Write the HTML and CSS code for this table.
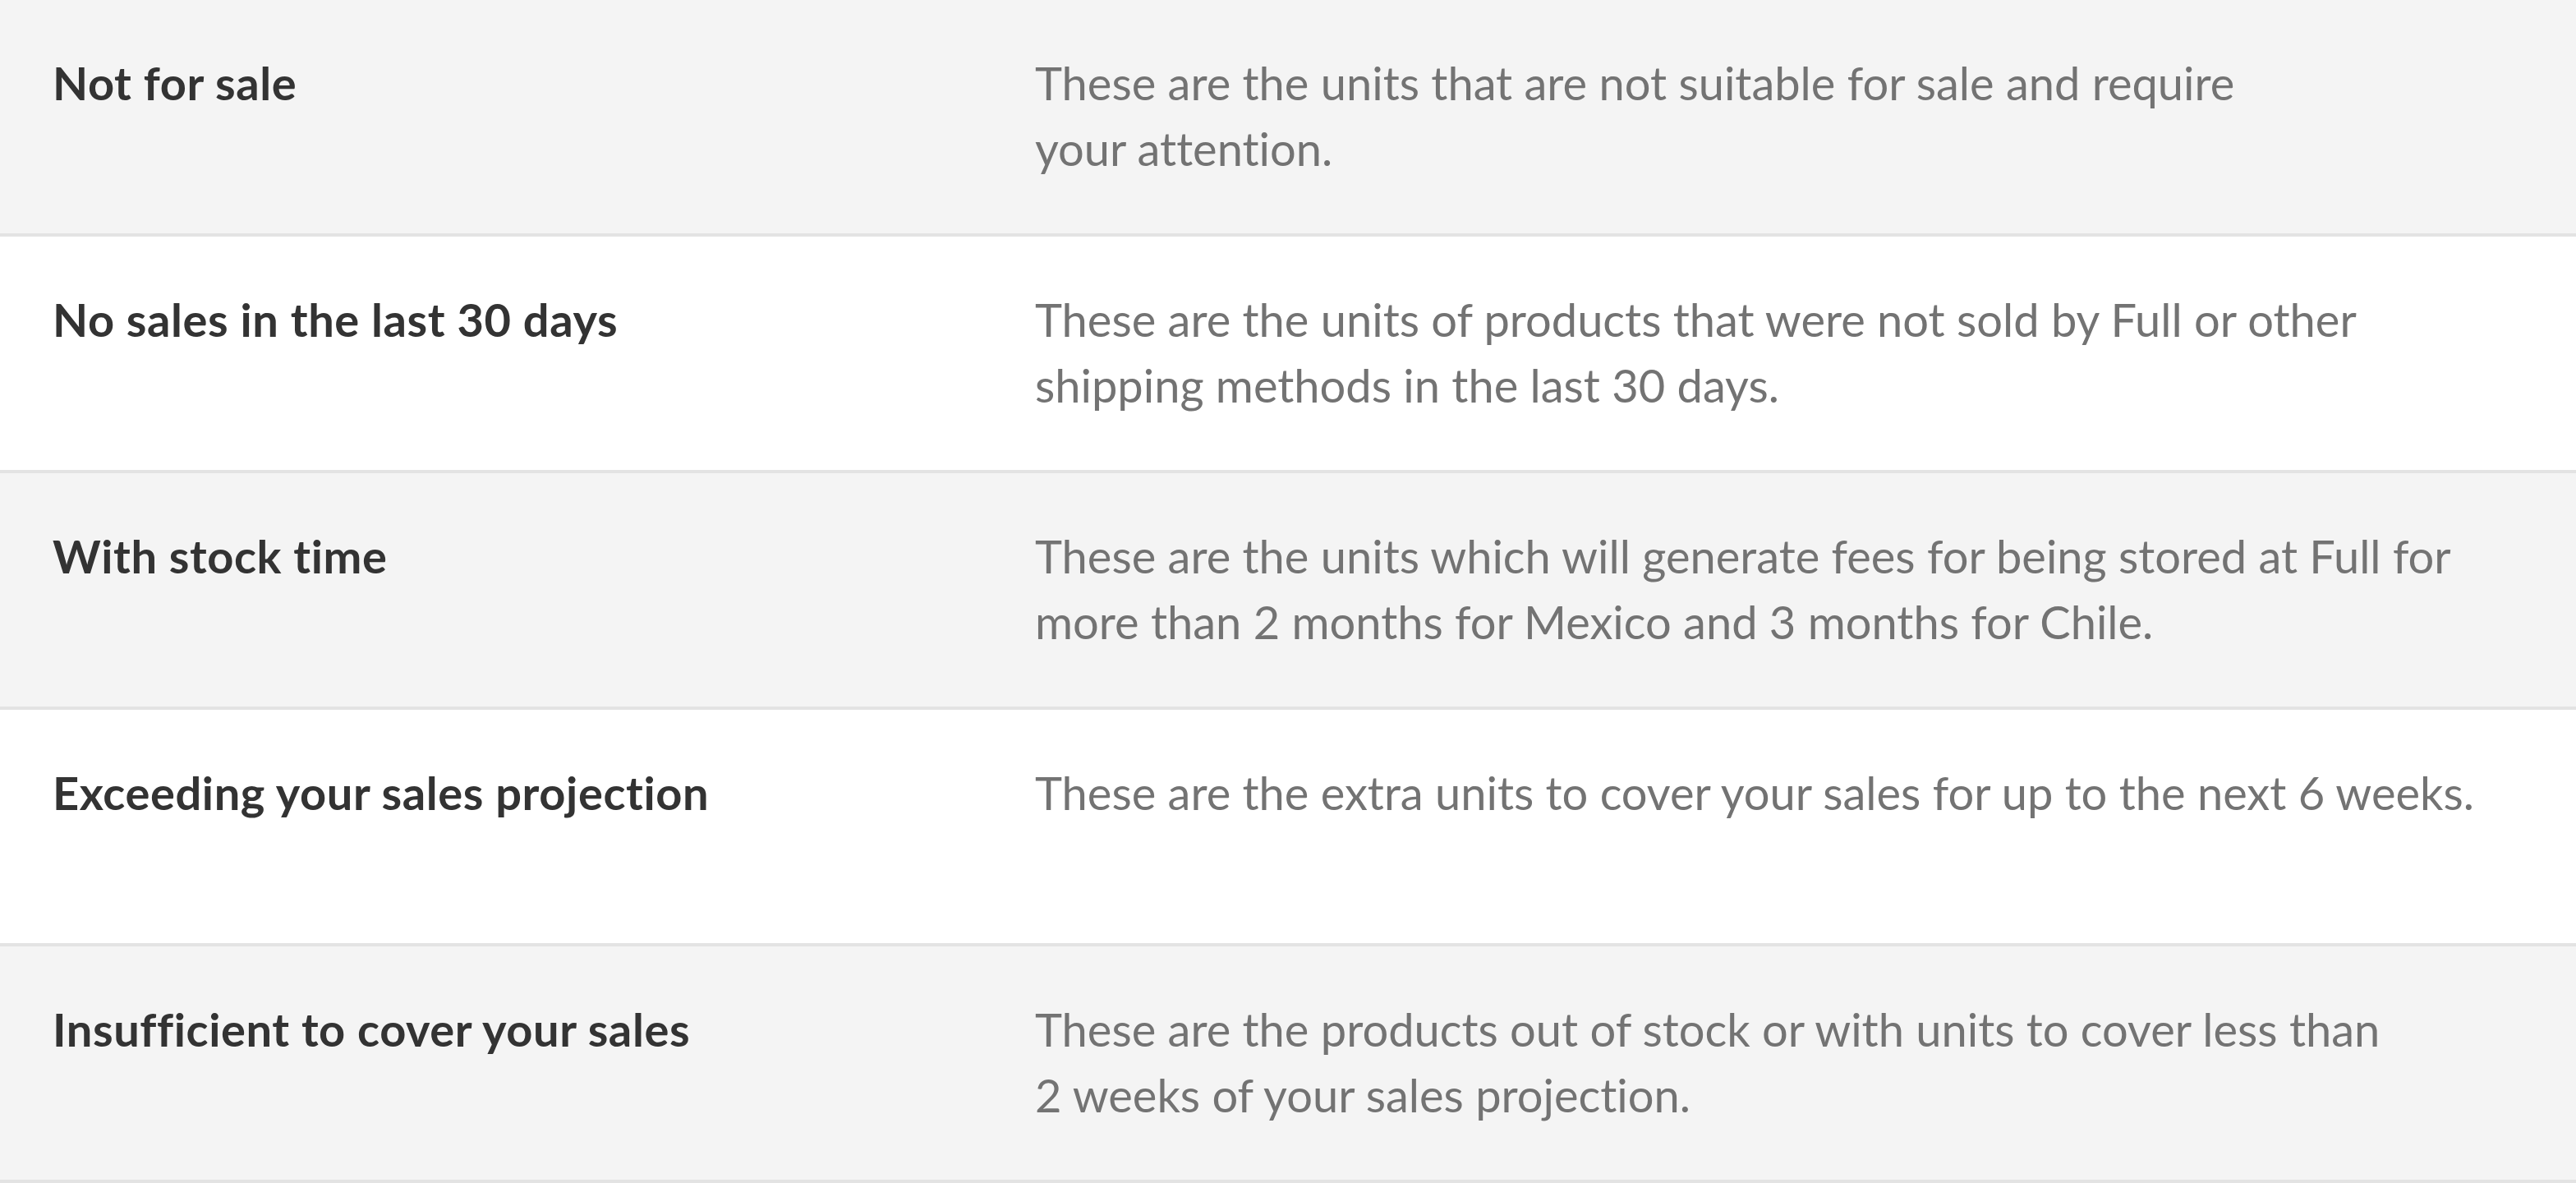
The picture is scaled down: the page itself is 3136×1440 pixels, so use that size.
FILE: index.html
```html
<!DOCTYPE html>
<html lang="en">
<head>
    <meta charset="UTF-8">
    <meta name="viewport" content="width=device-width, initial-scale=1.0">
    <title>Stock status</title>
    <link rel="stylesheet" href="styles.css">
</head>
<body>
    <div class="status-table">
        <div class="status-row">
            <div class="status-name">Not for sale</div>
            <div class="status-text">These are the units that are not suitable for sale and require<br>your attention.</div>
        </div>
        <div class="status-row">
            <div class="status-name">No sales in the last 30 days</div>
            <div class="status-text">These are the units of products that were not sold by Full or other<br>shipping methods in the last 30 days.</div>
        </div>
        <div class="status-row">
            <div class="status-name">With stock time</div>
            <div class="status-text">These are the units which will generate fees for being stored at Full for<br>more than 2 months for Mexico and 3 months for Chile.</div>
        </div>
        <div class="status-row">
            <div class="status-name">Exceeding your sales projection</div>
            <div class="status-text">These are the extra units to cover your sales for up to the next 6 weeks.</div>
        </div>
        <div class="status-row">
            <div class="status-name">Insufficient to cover your sales</div>
            <div class="status-text">These are the products out of stock or with units to cover less than<br>2 weeks of your sales projection.</div>
        </div>
    </div>
</body>
</html>
```

FILE: styles.css
```css
* {
    margin: 0;
    padding: 0;
    box-sizing: border-box;
}

body {
    font-family: Lato, 'Open Sans', sans-serif;
    font-variant-ligatures: none;
    background: #fff;
}

.status-row {
    display: grid;
    grid-template-columns: 1196px 1fr;
    height: 288px;
    padding: 61px 64px 0;
    border-bottom: 4px solid #e3e3e3;
    font-size: 56px;
    line-height: 80px;
}

.status-row:nth-child(odd) {
    background: #f4f4f4;
}

.status-name {
    font-weight: 700;
    color: #333;
    letter-spacing: 0.6px;
}

.status-text {
    color: #737373;
    white-space: nowrap;
}
```
